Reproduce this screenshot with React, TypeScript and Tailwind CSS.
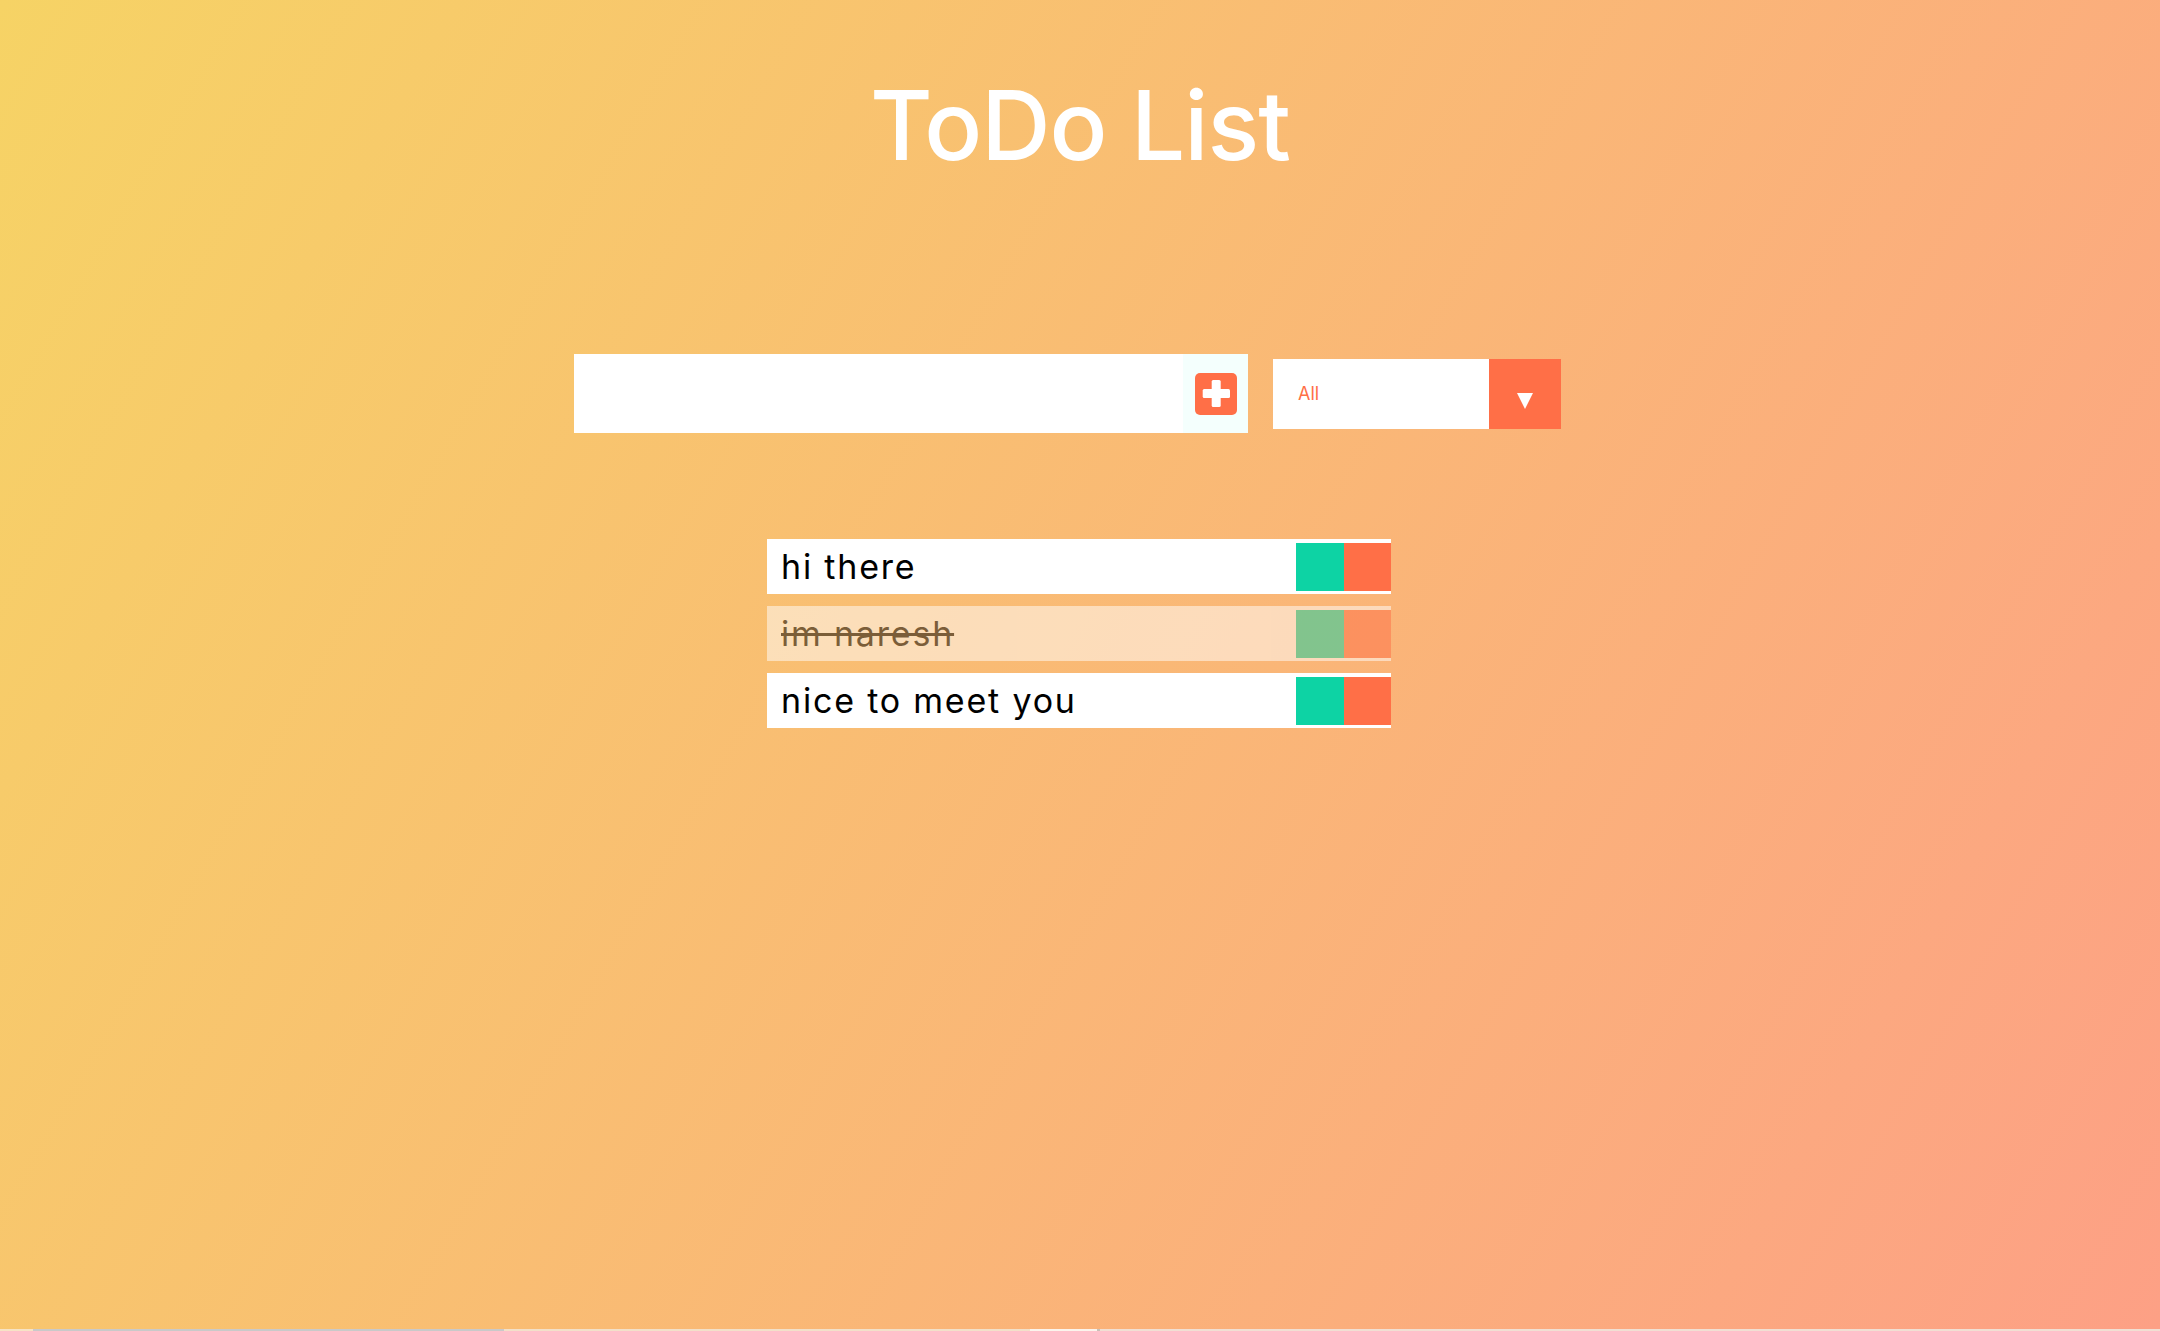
import React from "react";

const todos = [
  { text: "hi there", done: false },
  { text: "im naresh", done: true },
  { text: "nice to meet you", done: false },
];

function PlusSquare() {
  return (
    <svg width="42" height="42" viewBox="0 0 42 42">
      <rect x="0" y="0" width="42" height="42" rx="5" fill="#ff6f47" />
      <rect x="16.7" y="7" width="9" height="27" rx="1.5" fill="#ffffff" />
      <rect x="7.7" y="16" width="27.3" height="9" rx="1.5" fill="#ffffff" />
    </svg>
  );
}

export default function App() {
  return (
    <div className="flex flex-col w-full h-[1331px] overflow-hidden" style={{ fontFamily: "Inter, 'Noto Sans', sans-serif" }}>
      <div className="flex flex-col items-center h-[1329px] bg-[linear-gradient(120deg,#f6d365_0%,#fda085_100%)]">
        <header className="mt-[77px] flex justify-center">
          <h1 className="text-[96px] leading-none font-medium tracking-[-1px] text-white">ToDo List</h1>
        </header>

        <form className="mt-[181px] flex items-center justify-center w-full pr-[25px]">
          <div className="flex h-[79px] w-[674px] bg-white">
            <div className="flex-1" />
            <button type="button" className="w-[65px] h-full bg-[#f4fffd] flex items-center justify-center">
              <PlusSquare />
            </button>
          </div>
          <div className="ml-[25px] flex h-[70px] w-[288px] bg-white">
            <div className="flex-1 flex items-center pl-[25px] text-[18px] text-[#ff6f47]">All</div>
            <div className="w-[72px] h-full bg-[#ff6f47] flex items-center justify-center">
              <svg width="16" height="16" viewBox="0 0 16 16" className="mt-[14px]">
                <polygon points="0,0 16,0 8,16" fill="#ffffff" />
              </svg>
            </div>
          </div>
        </form>

        <ul className="mt-[106px] flex flex-col gap-[12px] w-[624px] ml-[-2px]">
          {todos.map((t, i) => (
            <li
              key={i}
              className={
                "flex items-center h-[55px] bg-white " + (t.done ? "opacity-50" : "")
              }
            >
              <span
                className={
                  "flex-1 pl-[14px] text-[34px] leading-none tracking-[1.8px] text-black " +
                  (t.done ? "line-through" : "")
                }
              >
                {t.text}
              </span>
              <div className="w-[48px] h-[48px] bg-[#0dd3a4]" />
              <div className="w-[47px] h-[48px] bg-[#ff6f47]" />
            </li>
          ))}
        </ul>
      </div>
      <div className="flex h-[2px] w-full">
        <div className="w-[33px] bg-[#f6e3c5]" />
        <div className="w-[471px] bg-[#c9c9c9]" />
        <div className="w-[526px] bg-[#f2e0c9]" />
        <div className="w-[67px] bg-[#fbf4ec]" />
        <div className="w-[3px] bg-[#c9c0b8]" />
        <div className="flex-1 bg-[#f1dfd3]" />
      </div>
    </div>
  );
}
